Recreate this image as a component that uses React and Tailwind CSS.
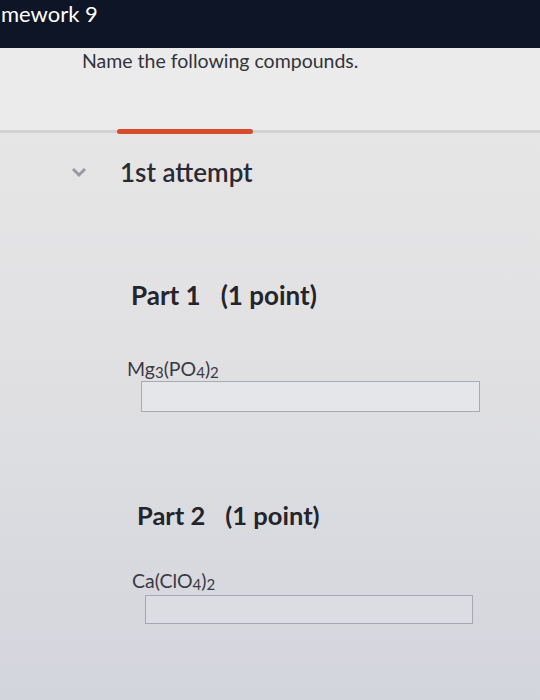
import React from 'react';

const font = { fontFamily: 'Lato, "Open Sans", sans-serif' };

const Formula = ({ parts }) => (
  <span>
    {parts.map((p, i) =>
      p.sub ? (
        <sub key={i} className="text-[15px] leading-none relative top-[2px]">{p.t}</sub>
      ) : (
        <span key={i}>{p.t}</span>
      )
    )}
  </span>
);

export default function App() {
  return (
    <div className="w-[540px] h-[700px] overflow-hidden bg-linear-to-b from-[#e8e8e8] via-[#e1e1e3] to-[#d3d5dc]" style={font}>
      {/* top bar */}
      <div className="h-[48px] bg-[#0e1526] overflow-hidden">
        <div className="pl-[1px] text-[22px] text-white leading-[28px] whitespace-nowrap">mework 9</div>
      </div>

      {/* prompt */}
      <div className="h-[82px] bg-[#ebebeb] pl-[82px]">
        <p className="text-[19.5px] text-[#33333a] leading-[26px]">Name the following compounds.</p>
      </div>

      {/* tab line */}
      <div className="relative h-[3px] bg-[#d2d2d2]">
        <div className="absolute left-[117px] -top-[1px] w-[136px] h-[5px] bg-[#d84a2c] rounded-sm"></div>
      </div>

      {/* attempt header */}
      <div className="flex items-center pt-[23px]">
        <svg className="ml-[71px] w-[16px] h-[12px]" viewBox="0 0 16 12">
          <path d="M2 3 L8 9 L14 3" fill="none" stroke="#9a9aa0" strokeWidth="3" />
        </svg>
        <span className="ml-[33px] text-[26px] font-semibold text-[#2a2a34] leading-[32px]">1st attempt</span>
      </div>

      {/* part 1 */}
      <h3 className="mt-[92px] ml-[131px] text-[26px] font-bold text-[#24242c] leading-[30px]">
        Part 1<span className="ml-[20px]">(1 point)</span>
      </h3>
      <div className="mt-[49px] ml-[127px] text-[19.5px] text-[#3a3a44] leading-[20px]">
        <Formula parts={[{ t: 'Mg' }, { t: '3', sub: true }, { t: '(PO' }, { t: '4', sub: true }, { t: ')' }, { t: '2', sub: true }]} />
      </div>
      <div className="mt-[2px] ml-[141px] w-[339px] h-[31px] border border-[#a8aab0] bg-[#e5e6e9]"></div>

      {/* part 2 */}
      <h3 className="mt-[88px] ml-[137px] text-[25.5px] font-bold text-[#24242c] leading-[30px]">
        Part 2<span className="ml-[20px]">(1 point)</span>
      </h3>
      <div className="mt-[41px] ml-[132px] text-[19.5px] text-[#3a3a44] leading-[20px]">
        <Formula parts={[{ t: 'Ca(ClO' }, { t: '4', sub: true }, { t: ')' }, { t: '2', sub: true }]} />
      </div>
      <div className="mt-[4px] ml-[145px] w-[328px] h-[29px] border border-[#a6a8b0] bg-[#dcdde3]"></div>
    </div>
  );
}
